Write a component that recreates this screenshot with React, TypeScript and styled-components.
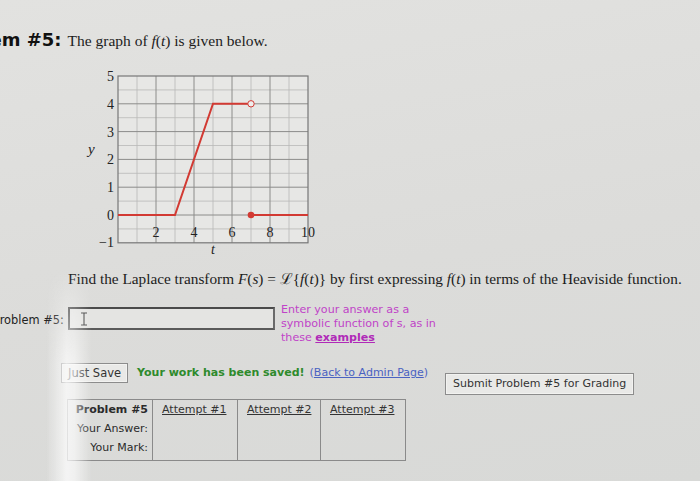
import React from "react";
import styled, {createGlobalStyle} from "styled-components";

const Global = createGlobalStyle`
  html, body {
    margin: 0;
    padding: 0;
    width: 700px;
    height: 481px;
    overflow: hidden;
    background: linear-gradient(170deg, #e2e2e0 0%, #dcdcda 55%, #d8d9d7 100%);
  }
`;

const Page = styled.div`
  display: flex;
  flex-direction: column;
  align-items: flex-start;
  padding-top: 28px;
  font-family: "DejaVu Sans", Verdana, sans-serif;
  color: #2a2a2a;
`;

const Title = styled.div`
  display: flex;
  align-items: baseline;
  gap: 6px;
  height: 24px;
  line-height: 24px;
  margin-left: -64px;
  white-space: nowrap;
`;

const TitleNum = styled.span`
  font-weight: bold;
  font-size: 18px;
  color: #111;
`;

const SerifText = styled.span`
  font-family: "Liberation Serif", "Times New Roman", serif;
  font-size: ${(p: {size?: number}) => p.size ?? 16}px;
  color: #1c1c1c;
`;

const I = styled.i`
  font-style: italic;
`;

const GraphSvg = styled.svg`
  display: block;
  margin: 10px 0 0 60px;
  font-family: "Liberation Serif", "Times New Roman", serif;
`;

const Prompt = styled.div`
  margin: 10px 0 0 68px;
  line-height: 18px;
  white-space: nowrap;
`;

const AnswerRow = styled.div`
  display: flex;
  align-items: flex-start;
  margin-top: 15px;
`;

const Label = styled.span`
  margin: 10px 0 0 -7px;
  font-size: 11.4px;
  line-height: 14px;
  color: #222;
  width: 75px;
  white-space: nowrap;
`;

const InputBox = styled.div`
  margin-top: 4px;
  width: 193px;
  height: 19px;
  border: 2px solid #4a4a4a;
  border-right-color: #6a6a6a;
  border-bottom-color: #5a5a5a;
  background: #e4e4e2;
  display: flex;
  align-items: center;
  padding-left: 10px;
  box-sizing: content-box;
`;

const Hint = styled.div`
  margin-left: 6px;
  font-size: 11.1px;
  line-height: 14px;
  color: #c044c8;
  width: 165px;
  a {
    color: #b02ab8;
    font-weight: bold;
    text-decoration: underline;
  }
`;

const SaveRow = styled.div`
  display: flex;
  align-items: flex-start;
  margin: 18px 0 0 61px;
  font-size: 11px;
  white-space: nowrap;
`;

const Button = styled.div`
  border: 1px solid #8c8c8c;
  background: #e9e9e7;
  color: #333;
  font-size: 11.5px;
  line-height: 18px;
  padding: 0 6px;
  box-shadow: inset 0 0 0 1px #f2f2f0;
`;

const SavedMsg = styled.span`
  margin-left: 9px;
  line-height: 20px;
  color: #2e8a2c;
  font-weight: bold;
`;

const AdminLink = styled.span`
  margin-left: 5px;
  line-height: 20px;
  color: #4a62c2;
  a {
    color: #4a62c2;
    text-decoration: underline;
  }
`;

const SubmitButton = styled(Button)`
  margin: 10px 0 0 17px;
  font-size: 11px;
  line-height: 20px;
  padding: 0 7px;
`;

const Table = styled.div`
  display: grid;
  grid-template-columns: 85px 85px 83px 84px;
  margin: 4px 0 0 67px;
  border: 1px solid #8a8a8a;
  font-size: 11px;
  color: #2a2a2a;
`;

const HeadCol = styled.div`
  display: flex;
  flex-direction: column;
  align-items: flex-end;
  padding: 0 4px 2px 0;
  line-height: 19px;
  border-right: 1px solid #8a8a8a;
`;

const AttemptCol = styled.div`
  height: 59px;
  padding: 1px 0 0 9px;
  line-height: 18px;
  border-right: ${(p: {last?: boolean}) => (p.last ? "none" : "1px solid #8a8a8a")};
  a {
    color: #333;
    text-decoration: underline;
  }
`;

const Glare = styled.div`
  position: fixed;
  left: 46px;
  top: 270px;
  width: 46px;
  bottom: 0;
  pointer-events: none;
  background: linear-gradient(90deg, rgba(255, 255, 255, 0) 0%, rgba(250, 250, 250, 0.8) 45%, rgba(255, 255, 255, 0.6) 62%, rgba(255, 255, 255, 0) 100%);
  -webkit-mask-image: linear-gradient(to bottom, transparent 0%, #000 45%);
  mask-image: linear-gradient(to bottom, transparent 0%, #000 45%);
`;

const px = (t: number) => 58 + 19 * t;
const py = (y: number) => 14 + (5 - y) * 27.8;

function Graph() {
  const minorX = [1, 3, 5, 7, 9];
  const majorX = [2, 4, 6, 8];
  const minorY = [-0.5, 0.5, 1.5, 2.5, 3.5, 4.5];
  const majorY = [0, 1, 2, 3, 4];
  const red = "#d23a33";
  return (
    <GraphSvg width={270} height={198} viewBox="0 0 270 198">
      <rect x={px(0)} y={py(5)} width={190} height={py(-1) - py(5)} fill="#e7e7e5"/>
      {minorX.map(t => <line key={"mx" + t} x1={px(t)} x2={px(t)} y1={py(5)} y2={py(-1)} stroke="#b9b9b7" strokeWidth={0.8}/>)}
      {minorY.map(y => <line key={"my" + y} x1={px(0)} x2={px(10)} y1={py(y)} y2={py(y)} stroke="#b9b9b7" strokeWidth={0.8}/>)}
      {majorX.map(t => <line key={"Mx" + t} x1={px(t)} x2={px(t)} y1={py(5)} y2={py(-1)} stroke="#8c8c8a" strokeWidth={1}/>)}
      {majorY.map(y => <line key={"My" + y} x1={px(0)} x2={px(10)} y1={py(y)} y2={py(y)} stroke="#8c8c8a" strokeWidth={1}/>)}
      <rect x={px(0)} y={py(5)} width={190} height={py(-1) - py(5)} fill="none" stroke="#777" strokeWidth={1.2}/>
      {[5, 4, 3, 2, 1, 0].map(y => (
        <text key={"ly" + y} x={54} y={py(y) + 5} fontSize={14} textAnchor="end" fill="#222">{y}</text>
      ))}
      <text x={54} y={py(-1) + 4} fontSize={14} textAnchor="end" fill="#222">−1</text>
      {[2, 4, 6, 8].map(t => (
        <text key={"lx" + t} x={px(t)} y={py(-0.6) + 5} fontSize={14} textAnchor="middle" fill="#222">{t}</text>
      ))}
      <text x={px(10)} y={py(-0.6) + 5} fontSize={14} textAnchor="middle" fill="#222">10</text>
      <text x={28} y={92} fontSize={15} fontStyle="italic" fill="#222">y</text>
      <text x={px(5) - 2} y={192} fontSize={14} fontStyle="italic" fill="#222">t</text>
      <polyline points={`${px(0)},${py(0)} ${px(3)},${py(0)} ${px(5)},${py(4)} ${px(7) - 3},${py(4)}`} fill="none" stroke={red} strokeWidth={2}/>
      <circle cx={px(7)} cy={py(4)} r={3.2} fill="#eee" stroke={red} strokeWidth={1}/>
      <line x1={px(7)} x2={px(10)} y1={py(0)} y2={py(0)} stroke={red} strokeWidth={2}/>
      <circle cx={px(7)} cy={py(0)} r={3.3} fill={red}/>
    </GraphSvg>
  );
}

function IBeam() {
  return (
    <svg width={8} height={14} viewBox="0 0 8 14">
      <path d="M1 1h6M4 1v12M1 13h6" stroke="#444" strokeWidth={1.1} fill="none"/>
    </svg>
  );
}

export default function App() {
  return (
    <>
      <Global/>
      <Page>
        <Title>
          <TitleNum>Problem #5:</TitleNum>
          <SerifText size={15.5}>The graph of <I>f</I>(<I>t</I>) is given below.</SerifText>
        </Title>
        <Graph/>
        <Prompt>
          <SerifText size={15.3}>
            Find the Laplace transform <I>F</I>(<I>s</I>) = ℒ{"{"}<I>f</I>(<I>t</I>){"}"} by first expressing <I>f</I>(<I>t</I>) in terms of the Heaviside function.
          </SerifText>
        </Prompt>
        <AnswerRow>
          <Label>Problem #5:</Label>
          <InputBox><IBeam/></InputBox>
          <Hint>
            Enter your answer as a symbolic function of s, as in these <a>examples</a>
          </Hint>
        </AnswerRow>
        <SaveRow>
          <Button>Just Save</Button>
          <SavedMsg>Your work has been saved!</SavedMsg>
          <AdminLink>(<a>Back to Admin Page</a>)</AdminLink>
          <SubmitButton>Submit Problem #5 for Grading</SubmitButton>
        </SaveRow>
        <Table>
          <HeadCol>
            <b>Problem #5</b>
            <span>Your Answer:</span>
            <span>Your Mark:</span>
          </HeadCol>
          <AttemptCol><a>Attempt #1</a></AttemptCol>
          <AttemptCol><a>Attempt #2</a></AttemptCol>
          <AttemptCol last><a>Attempt #3</a></AttemptCol>
        </Table>
      </Page>
      <Glare/>
    </>
  );
}
